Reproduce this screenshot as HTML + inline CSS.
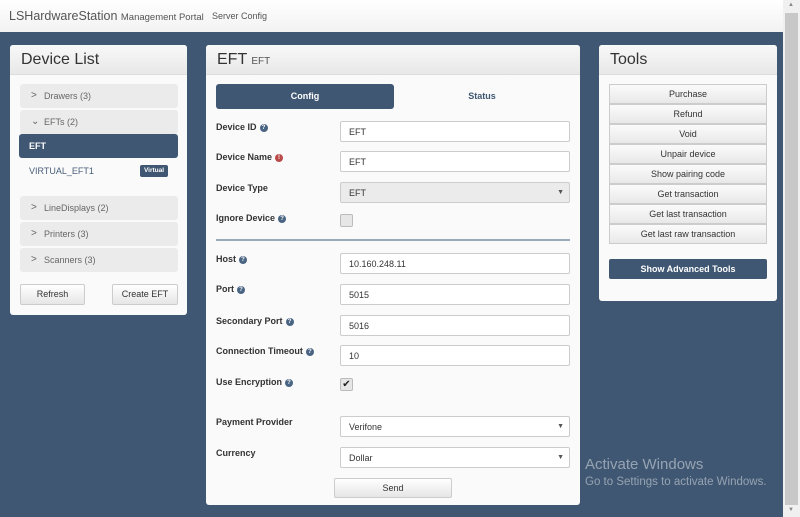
<!DOCTYPE html>
<html><head><style>
*{box-sizing:border-box;margin:0;padding:0}
body{width:800px;height:517px;overflow:hidden;background:#3f5772;font-family:"Liberation Sans",sans-serif;position:relative;color:#333}
.hdr{position:absolute;left:0;top:0;width:783px;height:32px;background:linear-gradient(#fff,#f2f2f2);}
.sb{position:absolute;right:0;top:0;width:17px;height:517px;background:#f0f0f0}
.thumb{position:absolute;left:2px;top:13px;width:13px;height:492px;background:#c8c8c8}
.p{position:absolute;background:#fafafa;border-radius:3px;overflow:hidden}
.ph{height:30px;background:linear-gradient(#f8f8f8,#e8e8e8);border-bottom:1px solid #ddd;padding-left:11px;font-size:16px;line-height:30px;color:#333}
.a{position:absolute}
.grp{position:absolute;left:10px;width:158px;height:24px;background:#ebebeb;border-radius:3px;font-size:9px;color:#666;line-height:24px;padding-left:24px}
.grp i{position:absolute;left:11px;font-style:normal;font-size:10px;color:#666}
.btn{position:absolute;border:1px solid #ccc;border-radius:2px;background:linear-gradient(#fff,#e6e6e6);font-size:9px;text-align:center;color:#333}
.lab{position:absolute;left:10px;font-size:9px;font-weight:bold;color:#333}
.q{display:inline-block;width:8px;height:8px;border-radius:50%;background:#4a6583;color:#fff;font-size:6px;line-height:8px;text-align:center;vertical-align:1px;margin-left:3px}
.inp{position:absolute;left:134px;width:230px;height:21px;border:1px solid #ccc;border-radius:2px;background:#fff;font-size:9px;line-height:20px;padding-left:8px}
.tool{position:absolute;left:10px;width:158px;height:20px;border:1px solid #ccc;background:linear-gradient(#fbfbfb,#e8e8e8);font-size:9px;text-align:center;line-height:18px;color:#333}
.arr{position:absolute;right:5px;font-size:7px;color:#555}
</style></head><body>
<div class="hdr">
<span class="a" style="left:9px;top:9px;font-size:12.5px;color:#555;white-space:nowrap">LSHardwareStation <span style="font-size:9.5px">Management Portal</span></span>
<span class="a" style="left:212px;top:11px;font-size:9px;color:#555">Server Config</span>
</div>
<div class="sb"><div class="thumb"></div><span class="a" style="left:5px;top:2px;font-size:6px;color:#888">▲</span><span class="a" style="left:5px;top:507px;font-size:6px;color:#888">▼</span></div>

<div class="p" style="left:10px;top:45px;width:177px;height:270px">
<div class="ph">Device List</div>
<div class="grp" style="top:39px"><i>&gt;</i>Drawers (3)</div>
<div class="grp" style="top:65px"><i>&#8964;</i>EFTs (2)</div>
<div class="a" style="left:9px;top:89px;width:159px;height:24px;background:#3f5772;border-radius:3px;color:#fff;font-size:9px;font-weight:bold;line-height:24px;padding-left:10px">EFT</div>
<div class="a" style="left:19px;top:121px;font-size:9px;color:#4a5f7a">VIRTUAL_EFT1</div>
<div class="a" style="left:130px;top:120px;width:28px;height:12px;background:#3f5772;border-radius:2px;color:#fff;font-size:6.5px;font-weight:bold;text-align:center;line-height:12px">Virtual</div>
<div class="grp" style="top:151px"><i>&gt;</i>LineDisplays (2)</div>
<div class="grp" style="top:177px"><i>&gt;</i>Printers (3)</div>
<div class="grp" style="top:203px"><i>&gt;</i>Scanners (3)</div>
<div class="btn" style="left:10px;top:239px;width:65px;height:21px;line-height:19px">Refresh</div>
<div class="btn" style="left:102px;top:239px;width:66px;height:21px;line-height:19px">Create EFT</div>
</div>

<div class="p" style="left:206px;top:45px;width:374px;height:460px">
<div class="ph">EFT <span style="font-size:10px;color:#555">EFT</span></div>
<div class="a" style="left:10px;top:39px;width:178px;height:25px;background:#3f5772;border-radius:3px;color:#fff;font-size:9px;font-weight:bold;text-align:center;line-height:25px">Config</div>
<div class="a" style="left:188px;top:39px;width:176px;height:25px;color:#3f5772;font-size:9px;font-weight:bold;text-align:center;line-height:25px">Status</div>
<div class="lab" style="top:77px">Device ID<span class="q">?</span></div>
<div class="inp" style="top:76px">EFT</div>
<div class="lab" style="top:107px">Device Name<span class="q" style="background:#b94a48">!</span></div>
<div class="inp" style="top:106px">EFT</div>
<div class="lab" style="top:138px">Device Type</div>
<div class="inp" style="top:137px;background:#ebebeb">EFT<span class="arr">▼</span></div>
<div class="lab" style="top:168px">Ignore Device<span class="q">?</span></div>
<div class="a" style="left:134px;top:169px;width:13px;height:13px;border:1px solid #bbb;border-radius:2px;background:#e6e6e6"></div>
<div class="a" style="left:10px;top:194px;width:354px;height:2px;background:#9aa9bb"></div>
<div class="lab" style="top:209px">Host<span class="q">?</span></div>
<div class="inp" style="top:208px">10.160.248.11</div>
<div class="lab" style="top:239px">Port<span class="q">?</span></div>
<div class="inp" style="top:239px">5015</div>
<div class="lab" style="top:271px">Secondary Port<span class="q">?</span></div>
<div class="inp" style="top:270px">5016</div>
<div class="lab" style="top:301px">Connection Timeout<span class="q">?</span></div>
<div class="inp" style="top:300px">10</div>
<div class="lab" style="top:332px">Use Encryption<span class="q">?</span></div>
<div class="a" style="left:134px;top:333px;width:13px;height:13px;border:1px solid #bbb;border-radius:2px;background:#e6e6e6;font-size:10px;line-height:11px;text-align:center;color:#222">✔</div>
<div class="lab" style="top:372px">Payment Provider</div>
<div class="inp" style="top:371px">Verifone<span class="arr">▼</span></div>
<div class="lab" style="top:403px">Currency</div>
<div class="inp" style="top:402px">Dollar<span class="arr">▼</span></div>
<div class="btn" style="left:128px;top:433px;width:118px;height:20px;line-height:18px">Send</div>
</div>

<div class="p" style="left:599px;top:45px;width:178px;height:256px">
<div class="ph">Tools</div>
<div class="tool" style="top:39px">Purchase</div>
<div class="tool" style="top:59px">Refund</div>
<div class="tool" style="top:79px">Void</div>
<div class="tool" style="top:99px">Unpair device</div>
<div class="tool" style="top:119px">Show pairing code</div>
<div class="tool" style="top:139px">Get transaction</div>
<div class="tool" style="top:159px">Get last transaction</div>
<div class="tool" style="top:179px">Get last raw transaction</div>
<div class="a" style="left:10px;top:214px;width:158px;height:20px;background:#3f5772;border-radius:2px;color:#fff;font-size:9px;font-weight:bold;text-align:center;line-height:20px">Show Advanced Tools</div>
</div>

<div class="a" style="left:585px;top:456px;font-size:15px;color:rgba(255,255,255,0.45)">Activate Windows</div>
<div class="a" style="left:585px;top:476px;font-size:11.5px;color:rgba(255,255,255,0.45)">Go to Settings to activate Windows.</div>
</body></html>
